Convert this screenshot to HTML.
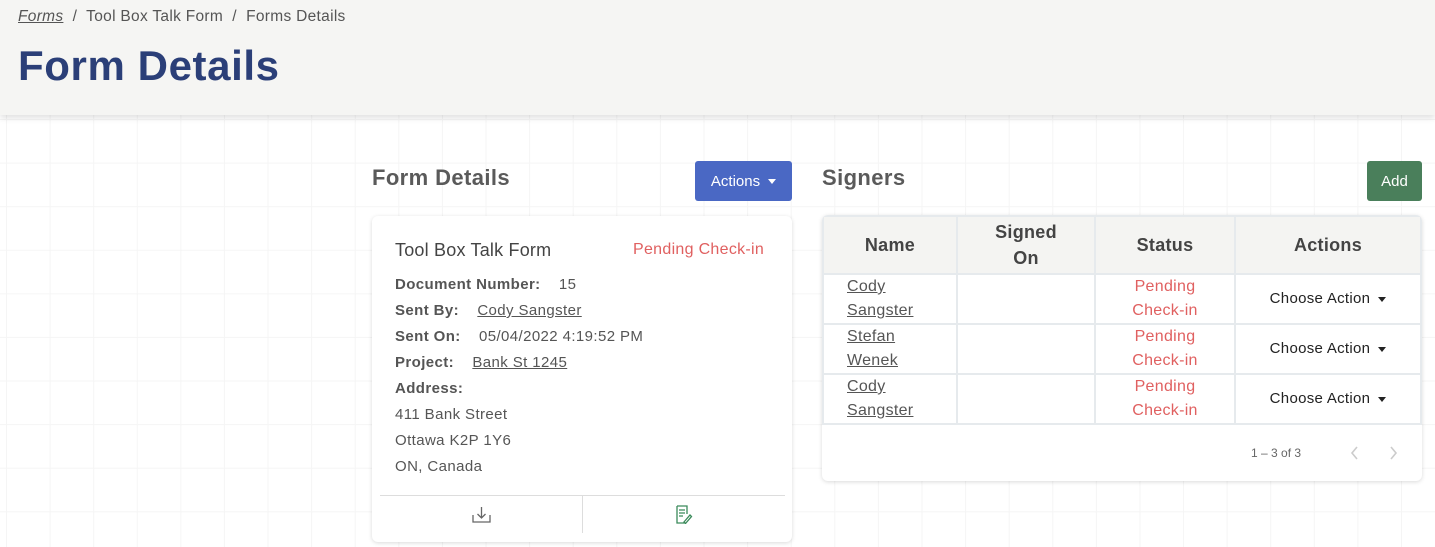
<!DOCTYPE html>
<html><head><style>
*{box-sizing:border-box;margin:0;padding:0}
body{width:1435px;height:547px;overflow:hidden;font-family:"Liberation Sans",sans-serif;color:#555;
background-color:#fff;
background-image:linear-gradient(#f5f5f5 1px,transparent 1px),linear-gradient(90deg,#f5f5f5 1px,transparent 1px);
background-size:43.6px 43.6px;background-position:6px 119px;position:relative}
.hdr{position:absolute;left:0;top:0;width:1435px;height:115px;background:#f5f5f3;box-shadow:0 3px 6px rgba(0,0,0,.12)}
.bc{position:absolute;left:18px;top:8px;font-size:15.5px;color:#555;letter-spacing:.3px}
.bc i{text-decoration:underline}
h1{position:absolute;left:18px;top:42px;font-size:42px;font-weight:bold;color:#2b3f78;letter-spacing:.6px}
.a{position:absolute}
.sec{font-size:22px;font-weight:bold;color:#5a5a5a;letter-spacing:.4px}
.btn{border-radius:3px;color:#fff;font-size:15px;display:flex;align-items:center;justify-content:center}
.card{background:#fff;border-radius:6px;box-shadow:0 1px 4px rgba(0,0,0,.15)}
.k{font-weight:bold;color:#555}
u{color:#555}
.pend{color:#e06060;letter-spacing:.3px}
table{border-collapse:collapse;width:600px;font-size:16px;letter-spacing:.3px}
td,th{border:2px solid #e6eaed;text-align:center}
th{background:#f4f4f2;font-size:18px;color:#444;height:58px;line-height:26px}
td{height:50px;line-height:24px}
.car{display:inline-block;width:0;height:0;border-left:4px solid transparent;border-right:4px solid transparent;border-top:5px solid currentColor;vertical-align:middle;margin-left:8px}
</style></head><body>
<div class="hdr"></div>
<div class="bc"><i>Forms</i> &nbsp;/&nbsp; Tool Box Talk Form &nbsp;/&nbsp; Forms Details</div>
<h1>Form Details</h1>

<div class="a sec" style="left:372px;top:165px">Form Details</div>
<div class="a btn" style="left:695px;top:161px;width:97px;height:40px;background:#4a68c4">Actions<span class="car"></span></div>

<div class="a card" style="left:372px;top:216px;width:420px;height:326px">
 <div class="a" style="left:23px;top:24px;font-size:18px;color:#444;letter-spacing:.2px">Tool Box Talk Form</div>
 <div class="a pend" style="left:261px;top:25px;font-size:16px">Pending Check-in</div>
 <div class="a" style="left:23px;top:56px;font-size:15px;line-height:26px;letter-spacing:.4px">
  <div><span class="k">Document Number:</span>&nbsp;&nbsp;&nbsp; 15</div>
  <div><span class="k">Sent By:</span>&nbsp;&nbsp;&nbsp; <u>Cody Sangster</u></div>
  <div><span class="k">Sent On:</span>&nbsp;&nbsp;&nbsp; 05/04/2022 4:19:52 PM</div>
  <div><span class="k">Project:</span>&nbsp;&nbsp;&nbsp; <u>Bank St 1245</u></div>
  <div class="k">Address:</div>
  <div>411 Bank Street</div><div>Ottawa K2P 1Y6</div><div>ON, Canada</div>
 </div>
 <div class="a" style="left:8px;top:279px;width:405px;border-top:1px solid #ddd"></div>
 <div class="a" style="left:210px;top:280px;height:37px;border-left:1px solid #ddd"></div>
 <svg class="a" style="left:100px;top:289px" width="19" height="19" viewBox="0 0 19 19" fill="none" stroke="#666" stroke-width="1.3"><path d="M1 10v7h17v-7M9.5 2v11M5.5 9l4 4 4-4"/></svg>
 <svg class="a" style="left:303px;top:289px" width="18" height="19" viewBox="0 0 18 19" fill="none" stroke="#3a8a5a" stroke-width="1.3"><path d="M2 1h10v8M2 1v17h9M4 5h6M4 8h6M4 11h4M9 17l6-7 1.5 1.5-6 7z"/></svg>
</div>

<div class="a sec" style="left:822px;top:165px">Signers</div>
<div class="a btn" style="left:1367px;top:161px;width:55px;height:40px;background:#4a7f5b">Add</div>

<div class="a card" style="left:822px;top:215px;width:600px;height:266px;overflow:hidden">
<table>
<tr><th style="width:134px">Name</th><th style="width:138px">Signed<br>On</th><th style="width:140px">Status</th><th>Actions</th></tr>
<tr><td style="text-align:left;padding-left:23px"><u>Cody<br>Sangster</u></td><td></td><td class="pend">Pending<br>Check-in</td><td style="color:#222;font-size:15px">Choose Action<span class="car"></span></td></tr>
<tr><td style="text-align:left;padding-left:23px"><u>Stefan<br>Wenek</u></td><td></td><td class="pend">Pending<br>Check-in</td><td style="color:#222;font-size:15px">Choose Action<span class="car"></span></td></tr>
<tr><td style="text-align:left;padding-left:23px"><u>Cody<br>Sangster</u></td><td></td><td class="pend">Pending<br>Check-in</td><td style="color:#222;font-size:15px">Choose Action<span class="car"></span></td></tr>
</table>
<div class="a" style="left:429px;top:231px;font-size:12px;color:#666">1 – 3 of 3</div>
<svg class="a" style="left:526px;top:230px" width="14" height="16" viewBox="0 0 14 16" fill="none" stroke="#ccc" stroke-width="1.6"><path d="M9 2l-5 6 5 6"/></svg>
<svg class="a" style="left:564px;top:230px" width="14" height="16" viewBox="0 0 14 16" fill="none" stroke="#ccc" stroke-width="1.6"><path d="M5 2l5 6-5 6"/></svg>
</div>
</body></html>
